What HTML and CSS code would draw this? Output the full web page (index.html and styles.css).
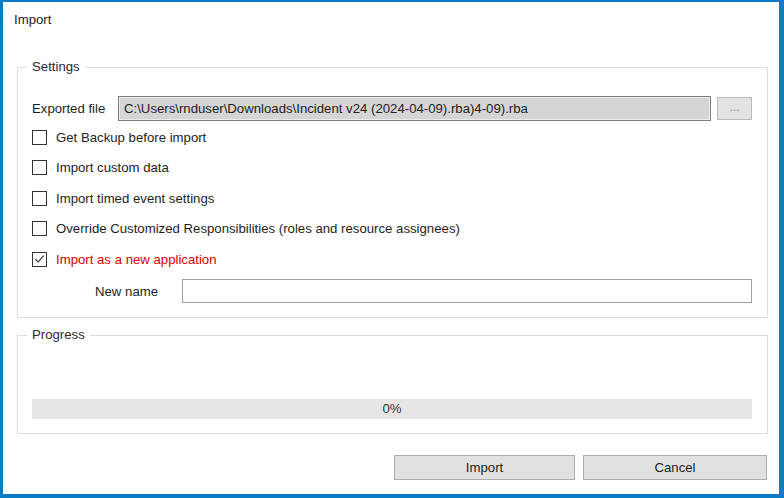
FILE: index.html
```html
<!DOCTYPE html>
<html>
<head>
<meta charset="utf-8">
<link rel="stylesheet" href="styles.css">
</head>
<body>
<div class="window">
  <div class="title">Import</div>
  <fieldset class="group settings">
    <legend>Settings</legend>
    <div class="file-row">
      <span class="label">Exported file</span>
      <div class="path">C:\Users\rnduser\Downloads\Incident v24 (2024-04-09).rba)4-09).rba</div>
      <button class="browse">...</button>
    </div>
    <div class="check-row first"><span class="box"></span><span>Get Backup before import</span></div>
    <div class="check-row"><span class="box"></span><span>Import custom data</span></div>
    <div class="check-row"><span class="box"></span><span>Import timed event settings</span></div>
    <div class="check-row"><span class="box"></span><span>Override Customized Responsibilities (roles and resource assignees)</span></div>
    <div class="check-row"><span class="box checked"><svg viewBox="0 0 14 14" width="14" height="14"><path d="M2.5 7.2 L5.6 10.2 L11.6 3.4" fill="none" stroke="#333" stroke-width="1.3"/></svg></span><span class="red">Import as a new application</span></div>
    <div class="name-row">
      <span class="label name-label">New name</span>
      <div class="name-input"></div>
    </div>
  </fieldset>
  <fieldset class="group progress">
    <legend>Progress</legend>
    <div class="bar">0%</div>
  </fieldset>
  <div class="actions">
    <button class="btn import">Import</button>
    <button class="btn cancel">Cancel</button>
  </div>
</div>
</body>
</html>
```
FILE: styles.css
```css
* { box-sizing: border-box; }
html, body { margin: 0; padding: 0; }
body {
  font-family: "Liberation Sans", Arial, sans-serif;
  font-size: 13.2px;
  color: #1e1e1e;
  background: #0c7cc7;
}
.window {
  width: 784px;
  height: 498px;
  background: #ffffff;
  border-style: solid;
  border-color: #0c7cc7;
  border-width: 2px 5px 4px 3px;
  overflow: hidden;
}
.title {
  height: 36px;
  line-height: 16px;
  padding: 10px 0 0 11px;
}
.group {
  border: 1px solid #dcdcdc;
  margin: 0 11px 0 14px;
  padding: 0 15px 14px 14px;
  min-width: 0;
}
.group legend {
  padding: 0 5px;
  margin-left: -5px;
  line-height: 16px;
  height: 16px;
  color: #2a2a2a;
}
.settings { margin-top: 21px; }
.file-row {
  display: flex;
  align-items: center;
  height: 25px;
  margin-top: 21px;
}
.label { flex: none; }
.file-row .label { width: 86px; }
.path {
  width: 593px;
  height: 25px;
  line-height: 23px;
  padding-left: 5px;
  background: #d5d5d5;
  border: 1px solid #7e7e7e;
  box-shadow: inset 0 0 0 1px #ececec;
  white-space: nowrap;
  overflow: hidden;
}
.browse {
  margin-left: 6px;
  width: 35px;
  height: 23px;
  background: #e3e3e3;
  border: 1px solid #b9b9b9;
  color: #8a8a8a;
  font: inherit;
  font-size: 12px;
  padding: 0 0 4px;
}
.check-row {
  display: flex;
  align-items: center;
  height: 30.5px;
}
.check-row.first { margin-top: 1px; }
.box {
  flex: none;
  width: 15px;
  height: 15px;
  border: 1px solid #333;
  margin-right: 9px;
  display: flex;
  align-items: center;
  justify-content: center;
  background: #fff;
}
.box svg { display: block; }
.red { color: #d60000; }
.name-row {
  display: flex;
  align-items: center;
  margin-top: 4.5px;
  height: 24px;
  padding-left: 63px;
}
.name-label { width: 87px; }
.name-input {
  flex: 1;
  height: 24px;
  border: 1px solid #a0a0a0;
  background: #fff;
}
.progress { margin-top: 9px; }
.bar {
  margin-top: 56px;
  height: 20px;
  line-height: 20px;
  background: #e6e6e6;
  text-align: center;
  color: #333;
}
.actions {
  display: flex;
  justify-content: flex-end;
  gap: 8px;
  margin-top: 21px;
  padding-right: 12px;
}
.btn {
  height: 25px;
  background: #e1e1e1;
  border: 1px solid #adadad;
  font: inherit;
  color: #1e1e1e;
  padding: 0;
}
.import { width: 181px; }
.cancel { width: 184px; }
```
